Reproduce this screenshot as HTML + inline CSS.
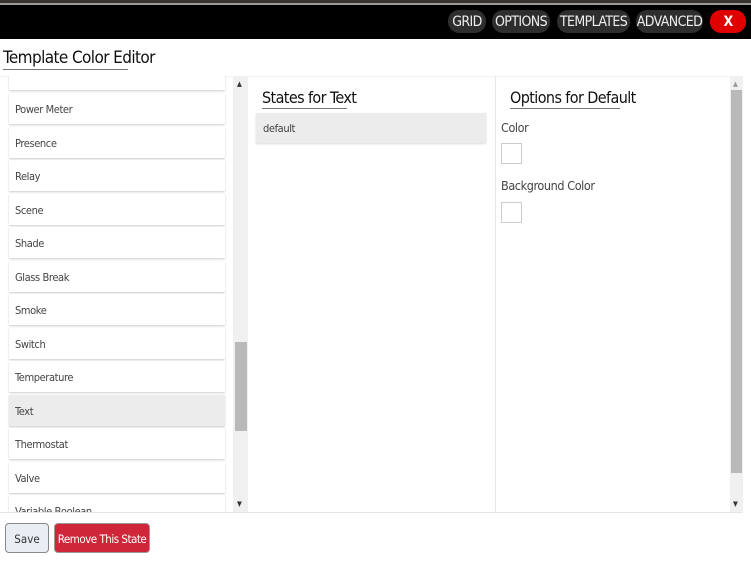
<!DOCTYPE html>
<html><head><style>
*{margin:0;padding:0;box-sizing:border-box}
body{width:751px;height:562px;overflow:hidden;background:#fff;font-family:"DejaVu Sans Condensed","Liberation Sans",sans-serif;position:relative;color:#333}
.top{position:absolute;left:0;top:0;width:751px;height:39px;background:#000}
.top .b1{position:absolute;left:0;top:0;width:751px;height:3px;background:#3b3232}
.top .b2{position:absolute;left:0;top:3px;width:751px;height:2px;background:#9a9a9a}
.btn{position:absolute;top:10px;height:23px;border-radius:11px;background:#2e2e2e;color:#eee;font-size:14px;line-height:24px;text-align:center;letter-spacing:-0.6px}
.x{background:#e00000;color:#fff;font-weight:bold}
.title{position:absolute;left:3px;top:48px;font-size:17px;color:#111;letter-spacing:-0.6px;border-bottom:1px solid #777;padding-bottom:0;width:125px;white-space:nowrap;line-height:21px}
.list{position:absolute;left:0;top:76px;width:233px;height:436px;overflow:hidden}
.it{position:absolute;left:9px;width:216px;height:31px;background:#fff;box-shadow:0 1px 2px rgba(0,0,0,.2);font-size:11px;line-height:33px;padding-left:6px;color:#444;letter-spacing:-0.4px}
.sel{background:#ececec}
.sb{position:absolute;background:#f0f0f0}
.th{position:absolute;background:#b9b9b9}
.arr{position:absolute;font-size:7px;color:#333}
.h{position:absolute;font-size:16px;color:#111;letter-spacing:-0.6px;border-bottom:1px solid #777;white-space:nowrap;line-height:21px}
.lbl{position:absolute;font-size:12.5px;color:#444;letter-spacing:-0.4px}
.sw{position:absolute;width:21px;height:21px;border:1px solid #ccc;background:#fff}
</style></head><body>
<div class="top"><div class="b1"></div><div class="b2"></div>
<div class="btn" style="left:448px;width:38px">GRID</div>
<div class="btn" style="left:492px;width:58px">OPTIONS</div>
<div class="btn" style="left:557px;width:73px">TEMPLATES</div>
<div class="btn" style="left:636px;width:67px">ADVANCED</div>
<div class="btn x" style="left:710px;width:36px">X</div>
</div>
<div class="title">Template Color Editor</div>
<div style="position:absolute;left:0;top:76px;width:743px;height:1px;background:#f2f2f2"></div>
<div class="list">
<div class="it" style="top:-17px;line-height:20px;padding-top:4px">Outlet</div>
<div class="it" style="top:17px">Power Meter</div>
<div class="it" style="top:51px">Presence</div>
<div class="it" style="top:84px">Relay</div>
<div class="it" style="top:118px">Scene</div>
<div class="it" style="top:151px">Shade</div>
<div class="it" style="top:185px">Glass Break</div>
<div class="it" style="top:218px">Smoke</div>
<div class="it" style="top:252px">Switch</div>
<div class="it" style="top:285px">Temperature</div>
<div class="it sel" style="top:319px">Text</div>
<div class="it" style="top:352px">Thermostat</div>
<div class="it" style="top:386px">Valve</div>
<div class="it" style="top:419px">Variable Boolean</div>
</div>
<div class="sb" style="left:233px;top:76px;width:15px;height:436px"></div>
<div class="th" style="left:235px;top:342px;width:12px;height:89px"></div>
<div class="arr" style="left:237px;top:80px">▲</div>
<div class="arr" style="left:237px;top:500px">▼</div>
<div style="position:absolute;left:495px;top:76px;width:1px;height:436px;background:#e6e6e6"></div>
<div class="h" style="left:262px;top:87px;width:85px">States for Text</div>
<div style="position:absolute;left:256px;top:113px;width:230px;height:30px;background:#ececec;box-shadow:0 1px 2px rgba(0,0,0,.15);font-size:11px;line-height:31px;padding-left:7px;color:#444;letter-spacing:-0.4px">default</div>
<div class="h" style="left:510px;top:87px;width:110px">Options for Default</div>
<div class="lbl" style="left:501px;top:120px">Color</div>
<div class="sw" style="left:501px;top:143px"></div>
<div class="lbl" style="left:501px;top:178px">Background Color</div>
<div class="sw" style="left:501px;top:202px"></div>
<div class="sb" style="left:730px;top:76px;width:13px;height:436px"></div>
<div class="th" style="left:731px;top:90px;width:11px;height:383px"></div>
<div class="arr" style="left:733px;top:80px;color:#999">▲</div>
<div class="arr" style="left:733px;top:500px">▼</div>
<div style="position:absolute;left:0;top:512px;width:743px;height:1px;background:#e6e6e6"></div>
<div style="position:absolute;left:5px;top:523px;width:44px;height:30px;border:1px solid #888;border-radius:4px;background:#e9eef5;font-size:11.5px;line-height:30px;text-align:center;color:#333">Save</div>
<div style="position:absolute;left:54px;top:523px;width:96px;height:30px;border:1px solid #999;border-radius:4px;background:#d0263a;font-size:11.5px;line-height:30px;text-align:center;color:#fff;letter-spacing:-0.5px">Remove This State</div>
</body></html>
